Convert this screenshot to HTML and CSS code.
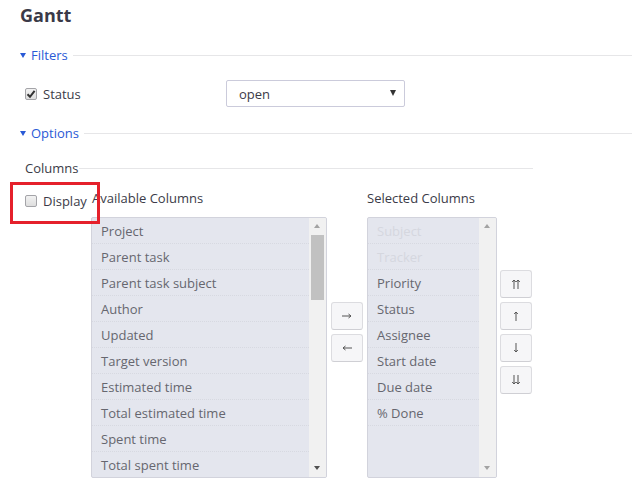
FILE: index.html
```html
<!DOCTYPE html>
<html>
<head>
<meta charset="utf-8">
<link rel="stylesheet" href="styles.css">
</head>
<body>
<div class="page">
  <h2 class="title">Gantt</h2>

  <div class="legend">
    <span class="tri"></span><span class="legend-text">Filters</span><span class="rule"></span>
  </div>

  <div class="filter-row">
    <label class="chk-label status-label">
      <span class="chk checked"><svg width="10" height="10" viewBox="0 0 10 10"><path d="M1.5 5.2 L4 7.8 L8.6 1.8" fill="none" stroke="#333" stroke-width="2"/></svg></span>
      <span>Status</span>
    </label>
    <div class="select"><span class="sel-text">open</span><span class="sel-arrow"></span></div>
  </div>

  <div class="legend options">
    <span class="tri"></span><span class="legend-text">Options</span><span class="rule"></span>
  </div>

  <div class="columns-head">
    <span class="columns-text">Columns</span><span class="rule"></span>
  </div>

  <div class="columns">
    <label class="chk-label display-label">
      <span class="chk"></span>
      <span>Display</span>
    </label>

    <div class="col-block avail">
      <div class="col-title">Available Columns</div>
      <div class="list">
        <div class="items">
          <div class="item">Project</div>
          <div class="item">Parent task</div>
          <div class="item">Parent task subject</div>
          <div class="item">Author</div>
          <div class="item">Updated</div>
          <div class="item">Target version</div>
          <div class="item">Estimated time</div>
          <div class="item">Total estimated time</div>
          <div class="item">Spent time</div>
          <div class="item">Total spent time</div>
        </div>
        <div class="scrollbar">
          <span class="sb-up"></span>
          <div class="sb-track"><div class="sb-thumb"></div></div>
          <span class="sb-down dark"></span>
        </div>
      </div>
    </div>

    <div class="move-btns">
      <div class="btn"><svg width="10" height="8" viewBox="0 0 10 8"><path d="M0 4 H9 M6.5 2 L9 4 L6.5 6" fill="none" stroke="#555" stroke-width="1"/></svg></div>
      <div class="btn"><svg width="10" height="8" viewBox="0 0 10 8"><path d="M1 4 H10 M3.5 2 L1 4 L3.5 6" fill="none" stroke="#555" stroke-width="1"/></svg></div>
    </div>

    <div class="col-block selected">
      <div class="col-title">Selected Columns</div>
      <div class="list">
        <div class="items">
          <div class="item faded">Subject</div>
          <div class="item faded">Tracker</div>
          <div class="item">Priority</div>
          <div class="item">Status</div>
          <div class="item">Assignee</div>
          <div class="item">Start date</div>
          <div class="item">Due date</div>
          <div class="item">% Done</div>
        </div>
        <div class="scrollbar">
          <span class="sb-up"></span>
          <div class="sb-track"></div>
          <span class="sb-down"></span>
        </div>
      </div>
    </div>

    <div class="order-btns">
      <div class="btn"><svg width="10" height="10" viewBox="0 0 10 10"><path d="M3 10 V1 M1.2 3 L3 1 L4.8 3 M7 10 V1 M5.2 3 L7 1 L8.8 3" fill="none" stroke="#555" stroke-width="1"/></svg></div>
      <div class="btn"><svg width="10" height="10" viewBox="0 0 10 10"><path d="M5 10 V1 M3.2 3 L5 1 L6.8 3" fill="none" stroke="#555" stroke-width="1"/></svg></div>
      <div class="btn"><svg width="10" height="10" viewBox="0 0 10 10"><path d="M5 0 V9 M3.2 7 L5 9 L6.8 7" fill="none" stroke="#555" stroke-width="1"/></svg></div>
      <div class="btn"><svg width="10" height="10" viewBox="0 0 10 10"><path d="M3 0 V9 M1.2 7 L3 9 L4.8 7 M7 0 V9 M5.2 7 L7 9 L8.8 7" fill="none" stroke="#555" stroke-width="1"/></svg></div>
    </div>
  </div>

  <div class="highlight"></div>
</div>
</body>
</html>
```

FILE: styles.css
```css
* { box-sizing: border-box; }

html, body {
  margin: 0;
  padding: 0;
  background: #fff;
}

body {
  font-family: "Open Sans", "Noto Sans", "DejaVu Sans", sans-serif;
  font-size: 13px;
  color: #3b3b48;
}

.page {
  position: relative;
  width: 632px;
  height: 494px;
  overflow: hidden;
}

.title {
  margin: 0;
  padding-left: 20px;
  height: 30px;
  line-height: 30px;
  font-size: 18px;
  font-weight: 700;
  color: #3a3a48;
}

.legend {
  display: flex;
  align-items: center;
  height: 20px;
  margin-top: 15px;
  padding-left: 20px;
  color: #2a5ad6;
}

.legend.options {
  margin-top: 16px;
}

.tri {
  width: 0;
  height: 0;
  border-left: 3px solid transparent;
  border-right: 3px solid transparent;
  border-top: 5px solid #2a5ad6;
  margin-right: 5px;
}

.legend-text {
  line-height: 20px;
}

.rule {
  flex: 1;
  height: 0;
  border-top: 1px solid #e6e6e8;
  margin-left: 5px;
}

.filter-row {
  display: flex;
  align-items: center;
  margin-top: 15px;
  padding-left: 25px;
  height: 27px;
}

.chk-label {
  display: flex;
  align-items: center;
  white-space: nowrap;
  line-height: 18px;
}

.status-label {
  width: 201px;
}

.chk {
  width: 12px;
  height: 12px;
  border: 1px solid #a4a4a8;
  border-radius: 2px;
  background: linear-gradient(#f2f2f2, #dedede);
  margin-right: 6px;
  display: flex;
  align-items: center;
  justify-content: center;
  flex: none;
}

.select {
  width: 179px;
  height: 27px;
  border: 1px solid #cbcbdb;
  border-radius: 2px;
  background: #fff;
  display: flex;
  align-items: center;
  justify-content: space-between;
  padding: 0 8px 0 12px;
}

.sel-text {
  line-height: 18px;
  padding-top: 1px;
}

.sel-arrow {
  width: 0;
  height: 0;
  border-left: 3px solid transparent;
  border-right: 3px solid transparent;
  border-top: 6px solid #333;
  margin-top: -2px;
}

.columns-head {
  display: flex;
  align-items: center;
  height: 20px;
  margin-top: 15px;
  margin-left: 25px;
  width: 508px;
}

.columns-text {
  line-height: 20px;
}

.columns-head .rule {
  margin-left: 1px;
}

.columns {
  display: flex;
  align-items: flex-start;
  margin-top: 11px;
  padding-left: 25px;
}

.display-label {
  width: 66px;
  margin-top: 3px;
  position: relative;
  z-index: 0;
}

.col-block {
  display: flex;
  flex-direction: column;
}

.col-title {
  height: 18px;
  line-height: 18px;
  margin-bottom: 10px;
  color: #3b3b48;
}

.avail {
  width: 236px;
}

.avail .col-title {
  padding-left: 1px;
}

.selected {
  width: 130px;
  margin-left: 4px;
}

.list {
  height: 261px;
  border: 1px solid #d2d3dc;
  border-radius: 2px;
  background: #e4e6ee;
  display: flex;
  overflow: hidden;
}

.items {
  flex: 1;
  overflow: hidden;
}

.item {
  height: 26px;
  line-height: 25px;
  padding-top: 1px;
  padding-left: 9px;
  border-bottom: 1px dotted #d7d9e1;
  color: #66666f;
  white-space: nowrap;
}

.item.faded {
  color: #d5d7df;
}

.scrollbar {
  width: 17px;
  background: #f1f1f1;
  display: flex;
  flex-direction: column;
  align-items: center;
  flex: none;
}

.sb-up, .sb-down {
  height: 17px;
  width: 17px;
  position: relative;
  flex: none;
}

.sb-up::after, .sb-down::after {
  content: "";
  position: absolute;
  left: 5px;
  top: 6px;
  width: 0;
  height: 0;
  border-left: 3.5px solid transparent;
  border-right: 3.5px solid transparent;
}

.sb-up::after {
  border-bottom: 4px solid #a3a3a3;
}

.sb-down::after {
  border-top: 4px solid #a3a3a3;
}

.sb-down.dark::after {
  border-top-color: #505050;
}

.sb-track {
  flex: 1;
  width: 17px;
  padding: 0 2px;
}

.sb-thumb {
  height: 65px;
  background: #c1c1c1;
}

.move-btns {
  margin-left: 4px;
  margin-top: 113px;
  display: flex;
  flex-direction: column;
  gap: 4px;
}

.order-btns {
  margin-left: 3px;
  margin-top: 81px;
  display: flex;
  flex-direction: column;
  gap: 4px;
}

.btn {
  width: 32px;
  height: 28px;
  background: #f6f6f8;
  border: 1px solid #dcdce0;
  border-bottom-color: #cfcfd4;
  border-radius: 3px;
  display: flex;
  align-items: center;
  justify-content: center;
}

.highlight {
  position: absolute;
  left: 10px;
  top: 182px;
  width: 90px;
  height: 42px;
  border: 3px solid #e5202b;
  pointer-events: none;
}
```
